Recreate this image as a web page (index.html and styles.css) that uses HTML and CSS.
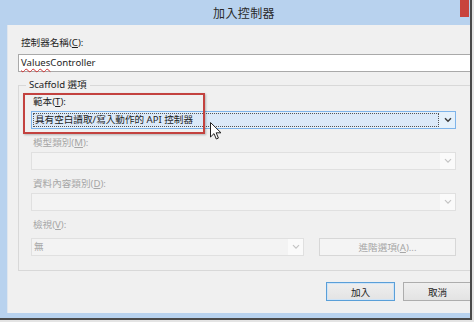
FILE: index.html
```html
<!DOCTYPE html>
<html lang="zh-Hant">
<head>
<meta charset="utf-8">
<title>加入控制器</title>
<link rel="stylesheet" href="styles.css">
</head>
<body>
<div class="screen">
  <div class="window">
    <div class="titlebar">
      <span class="title">加入控制器</span>
      <span class="close"></span>
    </div>
    <div class="frame">
      <div class="client">
        <div class="label">控制器名稱(<u>C</u>):</div>
        <div class="textbox"><span class="spell">Values</span>Controller</div>
        <div class="group">
          <div class="legend">Scaffold 選項</div>
          <div class="field first">
            <div class="flabel">範本(<u>T</u>):</div>
            <div class="combo active">
              <div class="combo-text">具有空白讀取/寫入動作的 API 控制器</div>
              <div class="combo-arrow"><svg width="8" height="6" viewBox="0 0 8 6"><path d="M1 1.2 L4 4.2 L7 1.2" fill="none" stroke="#3c3c3c" stroke-width="1.5"/></svg></div>
            </div>
          </div>
          <div class="field gap">
            <div class="flabel disabled">模型類別(<u>M</u>):</div>
            <div class="combo off">
              <div class="combo-text"></div>
              <div class="combo-arrow"><svg width="8" height="6" viewBox="0 0 8 6"><path d="M1 1.2 L4 4.2 L7 1.2" fill="none" stroke="#c4c4c4" stroke-width="1.2"/></svg></div>
            </div>
          </div>
          <div class="field gap">
            <div class="flabel disabled">資料內容類別(<u>D</u>):</div>
            <div class="combo off">
              <div class="combo-text"></div>
              <div class="combo-arrow"><svg width="8" height="6" viewBox="0 0 8 6"><path d="M1 1.2 L4 4.2 L7 1.2" fill="none" stroke="#c4c4c4" stroke-width="1.2"/></svg></div>
            </div>
          </div>
          <div class="field gap">
            <div class="flabel disabled">檢視(<u>V</u>):</div>
            <div class="view-row">
              <div class="combo off short">
                <div class="combo-text">無</div>
                <div class="combo-arrow"><svg width="8" height="6" viewBox="0 0 8 6"><path d="M1 1.2 L4 4.2 L7 1.2" fill="none" stroke="#c4c4c4" stroke-width="1.2"/></svg></div>
              </div>
              <div class="btn off-btn">進階選項(<u>A</u>)...</div>
            </div>
          </div>
        </div>
        <div class="buttons">
          <div class="btn default">加入</div>
          <div class="btn">取消</div>
        </div>
      </div>
    </div>
  </div>
  <div class="highlight"></div>
  <svg class="cursor" width="12" height="19" viewBox="0 0 12 19"><path d="M0.5 0.5 L0.5 15 L4 11.6 L6.3 17 L8.4 16.1 L6.2 10.8 L11 10.8 Z" fill="#fff" stroke="#222" stroke-width="1"/></svg>
</div>
</body>
</html>
```

FILE: styles.css
```css
* { box-sizing: border-box; }
html, body { margin: 0; padding: 0; }
body {
  width: 474px;
  height: 322px;
  overflow: hidden;
  background: #e4e4e4;
  font-family: "Noto Sans", "Noto Sans CJK TC", sans-serif;
  font-size: 9.6px;
  color: #1e1e1e;
}
.screen {
  position: relative;
  width: 474px;
  height: 322px;
}
.window {
  width: 472px;
  height: 320px;
  display: flex;
  flex-direction: column;
  background: #b8d2ee;
  border-right: 2px solid #4a4a4a;
  border-bottom: 2px solid #4a4a4a;
}
.titlebar {
  height: 25px;
  display: flex;
  align-items: center;
  padding-left: 213px;
  flex: none;
}
.title {
  font-family: "Noto Sans CJK TC", sans-serif;
  font-size: 12px;
  color: #2a2a2a;
  letter-spacing: 0.4px;
}
.close {
  margin-left: auto;
  margin-right: 1px;
  align-self: flex-start;
  width: 9px;
  height: 17px;
  background: #c8433c;
}
.frame {
  flex: 1;
  padding: 0 0 5px 7px;
  display: flex;
}
.client {
  flex: 1;
  background: #f0f0f0;
  overflow: hidden;
  padding: 11px 0 0 10px;
  border-left: 1px solid #dfe6ee;
}
.label {
  padding-left: 3px;
  height: 14px;
  line-height: 14px;
  white-space: nowrap;
}
u { text-underline-offset: 1px; }
.textbox {
  margin-top: 4px;
  width: 460px;
  height: 18px;
  background: #fff;
  border: 1px solid #a9a9a9;
  padding-left: 2px;
  line-height: 16px;
  white-space: nowrap;
}
.spell {
  text-decoration: underline wavy #d03030;
  text-decoration-thickness: 1px;
  text-underline-offset: 2px;
}
.group {
  margin-top: 13px;
  width: 470px;
  border: 1px solid #d8d8d8;
  padding: 0 0 14px 12px;
}
.legend {
  display: inline-block;
  margin: -8px 0 0 -5px;
  padding: 0 3px;
  background: #f0f0f0;
  height: 14px;
  line-height: 14px;
  vertical-align: top;
}
.field { display: flex; flex-direction: column; }
.field.first { margin-top: -4px; }
.field.gap { margin-top: 7px; }
.flabel {
  padding-left: 2px;
  height: 14px;
  line-height: 14px;
  margin-bottom: 2px;
  white-space: nowrap;
}
.disabled { color: #a6a6a6; }
.combo {
  width: 425px;
  height: 18px;
  display: flex;
}
.combo.active {
  border: 1px solid #7eb4ea;
  background: #e5f1fb;
}
.combo.active .combo-text {
  margin: 1px;
  border: 1px dotted #555;
  background: #dbe9f8;
  line-height: 12px;
  padding-left: 1px;
}
.combo-text {
  flex: 1;
  white-space: nowrap;
  overflow: hidden;
  padding-left: 2px;
  line-height: 16px;
}
.combo-arrow {
  width: 15px;
  display: flex;
  align-items: center;
  justify-content: center;
}
.combo.off {
  border: 1px solid #e0e0e0;
  background: #f3f3f3;
  color: #a6a6a6;
}
.combo.off .combo-arrow { background: #fafafa; }
.view-row {
  display: flex;
  align-items: center;
  gap: 15px;
  margin-top: 4px;
}
.combo.short { width: 273px; }
.btn {
  width: 69px;
  height: 19px;
  display: flex;
  align-items: center;
  justify-content: center;
  border: 1px solid #adadad;
  background: linear-gradient(#efefef, #e3e3e3);
  white-space: nowrap;
  flex: none;
}
.btn.off-btn {
  width: 137px;
  height: 18px;
  border-color: #d7d7d7;
  background: #f4f4f4;
  color: #a6a6a6;
}
.btn.default {
  border-color: #5a9fd8;
  box-shadow: inset 0 0 0 1px #cfe4f7;
}
.buttons {
  display: flex;
  justify-content: flex-end;
  gap: 8px;
  margin-top: 11px;
  margin-right: -1px;
  width: 454px;
}
.highlight {
  position: absolute;
  left: 23px;
  top: 93px;
  width: 182px;
  height: 41px;
  border: 2px solid #c3423f;
  box-shadow: 1px 1px 2px rgba(0,0,0,0.25);
}
.cursor {
  position: absolute;
  left: 210px;
  top: 122px;
}
```
